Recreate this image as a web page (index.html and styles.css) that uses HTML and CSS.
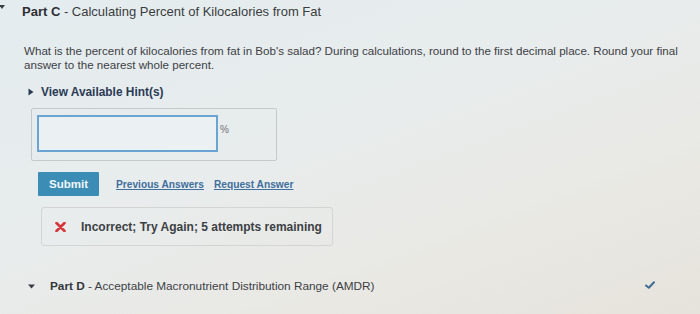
FILE: index.html
```html
<!DOCTYPE html>
<html>
<head>
<meta charset="utf-8">
<link rel="stylesheet" href="styles.css">
</head>
<body>
<div class="page">
  <div class="part-head">
    <svg class="tri-left" width="6" height="6" viewBox="0 0 6 6"><path d="M0 1 L6 1 L3 5 Z" fill="#3a3d42"/></svg>
    <span class="part-title"><b>Part C</b> - Calculating Percent of Kilocalories from Fat</span>
  </div>
  <p class="question">What is the percent of kilocalories from fat in Bob's salad? During calculations, round to the first decimal place. Round your final answer to the nearest whole percent.</p>
  <div class="hint">
    <svg class="hint-tri" width="6" height="8" viewBox="0 0 6 8"><path d="M0.5 0.5 L5.5 4 L0.5 7.5 Z" fill="#2b3a55"/></svg>
    <span>View Available Hint(s)</span>
  </div>
  <div class="answer">
    <div class="input"></div>
    <span class="unit">%</span>
  </div>
  <div class="actions">
    <button class="submit">Submit</button>
    <a class="link">Previous Answers</a>
    <a class="link">Request Answer</a>
  </div>
  <div class="feedback">
    <svg class="xicon" width="11" height="10" viewBox="0 0 11 10"><path d="M1.5 1 L9.5 9 M9.5 1 L1.5 9" stroke="#d8343c" stroke-width="2.6" stroke-linecap="round"/></svg>
    <span>Incorrect; Try Again; 5 attempts remaining</span>
  </div>
  <div class="part-d">
    <div class="part-d-left">
      <svg width="7" height="5" viewBox="0 0 7 5"><path d="M0 0.5 L7 0.5 L3.5 4.5 Z" fill="#3a3d42"/></svg>
      <span class="part-d-title"><b>Part D</b> - Acceptable Macronutrient Distribution Range (AMDR)</span>
    </div>
    <svg class="check" width="10" height="8" viewBox="0 0 10 8"><path d="M1 4.5 L3.8 6.8 L9 1.2" fill="none" stroke="#3d6b93" stroke-width="2" stroke-linecap="round" stroke-linejoin="round"/></svg>
  </div>
</div>
</body>
</html>
```
FILE: styles.css
```css
html, body {
  margin: 0;
  padding: 0;
}
body {
  width: 700px;
  height: 314px;
  overflow: hidden;
  background: linear-gradient(160deg, #e4ecef 0%, #e8ecec 45%, #e9e8e3 75%, #e6e3dc 100%);
  font-family: "Liberation Sans", Arial, sans-serif;
  color: #3b3e43;
}
.page {
  display: flex;
  flex-direction: column;
  align-items: flex-start;
}
.part-head {
  height: 22px;
  display: flex;
  align-items: center;
}
.tri-left {
  margin-left: -1px;
  margin-right: 17px;
  margin-top: -8px;
}
.part-title {
  font-size: 13px;
  color: #3a3c40;
}
.part-title b {
  color: #2e3034;
}
.question {
  margin: 22px 0 0 24px;
  width: 664px;
  font-size: 11.6px;
  line-height: 13.5px;
  color: #3d4045;
}
.hint {
  margin: 15px 0 0 28px;
  height: 12px;
  display: flex;
  align-items: center;
  font-size: 11.9px;
  font-weight: bold;
  color: #2b3a55;
}
.hint-tri {
  margin-right: 7px;
}
.answer {
  margin: 10px 0 0 31px;
  width: 246px;
  height: 53px;
  box-sizing: border-box;
  border: 1px solid #c6c9ca;
  border-radius: 2px;
  padding: 6px 0 0 5px;
  display: flex;
  align-items: flex-start;
}
.input {
  width: 181px;
  height: 37px;
  box-sizing: border-box;
  border: 2px solid #6aa4d2;
  background: rgba(240, 245, 247, 0.5);
}
.unit {
  margin: 9px 0 0 2px;
  font-size: 10px;
  color: #6f7378;
}
.actions {
  margin: 11px 0 0 38px;
  display: flex;
  align-items: center;
}
.submit {
  width: 61px;
  height: 24px;
  border: none;
  border-radius: 1px;
  background: #3b8db6;
  color: #f1f6f9;
  font-family: "Liberation Sans", Arial, sans-serif;
  font-size: 11.5px;
  font-weight: bold;
  padding: 0;
}
.link {
  font-size: 10.2px;
  font-weight: bold;
  color: #3f6f9c;
  text-decoration: underline;
  margin-left: 17px;
}
.link + .link {
  margin-left: 10px;
}
.feedback {
  margin: 11px 0 0 41px;
  width: 292px;
  height: 39px;
  box-sizing: border-box;
  border: 1px solid #d2d5d4;
  border-radius: 3px;
  display: flex;
  align-items: center;
  padding-left: 13px;
  font-size: 12px;
  font-weight: bold;
  color: #3c3f44;
}
.xicon {
  margin-right: 15px;
}
.part-d {
  margin: 30px 0 0 28px;
  width: 627px;
  height: 20px;
  display: flex;
  align-items: center;
  justify-content: space-between;
}
.part-d-left {
  display: flex;
  align-items: center;
}
.part-d-title {
  margin-left: 15px;
  font-size: 11.8px;
  color: #3d4045;
}
.part-d-title b {
  color: #33363a;
}
.check {
  margin-top: -2px;
}
```
